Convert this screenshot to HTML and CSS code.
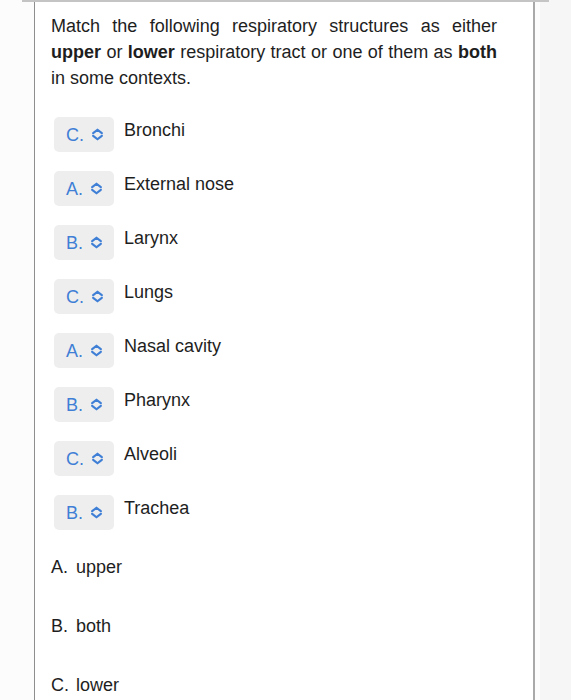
FILE: index.html
```html
<!DOCTYPE html>
<html>
<head>
<meta charset="utf-8">
<link rel="stylesheet" href="styles.css">
</head>
<body>
<div class="page">
  <div class="card">
    <p class="question">Match the following respiratory structures as either <b>upper</b> or <b>lower</b> respiratory tract or one of them as <b>both</b> in some contexts.</p>
    <div class="rows">
      <div class="row"><div class="select"><span class="val">C.</span><svg class="chev" viewBox="0 0 12 12"><path d="M2 4.8L6 1.6L10 4.8M2 7.2L6 10.4L10 7.2"/></svg></div><span class="label">Bronchi</span></div>
      <div class="row"><div class="select"><span class="val">A.</span><svg class="chev" viewBox="0 0 12 12"><path d="M2 4.8L6 1.6L10 4.8M2 7.2L6 10.4L10 7.2"/></svg></div><span class="label">External nose</span></div>
      <div class="row"><div class="select"><span class="val">B.</span><svg class="chev" viewBox="0 0 12 12"><path d="M2 4.8L6 1.6L10 4.8M2 7.2L6 10.4L10 7.2"/></svg></div><span class="label">Larynx</span></div>
      <div class="row"><div class="select"><span class="val">C.</span><svg class="chev" viewBox="0 0 12 12"><path d="M2 4.8L6 1.6L10 4.8M2 7.2L6 10.4L10 7.2"/></svg></div><span class="label">Lungs</span></div>
      <div class="row"><div class="select"><span class="val">A.</span><svg class="chev" viewBox="0 0 12 12"><path d="M2 4.8L6 1.6L10 4.8M2 7.2L6 10.4L10 7.2"/></svg></div><span class="label">Nasal cavity</span></div>
      <div class="row"><div class="select"><span class="val">B.</span><svg class="chev" viewBox="0 0 12 12"><path d="M2 4.8L6 1.6L10 4.8M2 7.2L6 10.4L10 7.2"/></svg></div><span class="label">Pharynx</span></div>
      <div class="row"><div class="select"><span class="val">C.</span><svg class="chev" viewBox="0 0 12 12"><path d="M2 4.8L6 1.6L10 4.8M2 7.2L6 10.4L10 7.2"/></svg></div><span class="label">Alveoli</span></div>
      <div class="row"><div class="select"><span class="val">B.</span><svg class="chev" viewBox="0 0 12 12"><path d="M2 4.8L6 1.6L10 4.8M2 7.2L6 10.4L10 7.2"/></svg></div><span class="label">Trachea</span></div>
    </div>
    <ul class="options">
      <li><span class="letter">A.</span>upper</li>
      <li><span class="letter">B.</span>both</li>
      <li><span class="letter">C.</span>lower</li>
    </ul>
  </div>
</div>
</body>
</html>
```

FILE: styles.css
```css
html, body {
  margin: 0;
  padding: 0;
  height: 700px;
  overflow: hidden;
}
body {
  background: linear-gradient(to right, #fcfcfc 0, #fcfcfc 540px, #f6f6f6 540px);
  font-family: "Liberation Sans", Arial, sans-serif;
  font-size: 18px;
  color: #1e1e1e;
}
.page {
  margin-left: 22px;
  width: 527px;
  border-top: 2px solid #c4c4c4;
  height: 698px;
}
.card {
  margin-left: 12px;
  width: 501px;
  height: 698px;
  background: #fff;
  border-left: 1px solid #8e8e8e;
  border-right: 2px solid #a9a9a9;
  padding: 11px 0 0 16px;
  box-sizing: border-box;
}
.question {
  margin: 0;
  width: 446px;
  line-height: 26px;
  text-align: justify;
}
.question b {
  font-weight: bold;
}
.rows {
  margin-top: 26px;
  display: flex;
  flex-direction: column;
  gap: 19px;
}
.row {
  display: flex;
  align-items: flex-start;
  gap: 10px;
  margin-left: 3px;
}
.select {
  width: 60px;
  height: 35px;
  box-sizing: border-box;
  background: #eeeeee;
  border-radius: 5px;
  display: flex;
  align-items: center;
  padding-left: 12px;
  gap: 7px;
}
.val {
  color: #3f7fd6;
  font-size: 18px;
  line-height: 20px;
  padding-top: 1px;
}
.chev {
  width: 13px;
  height: 13px;
  flex: none;
  fill: none;
  stroke: #3f7fd6;
  stroke-width: 2;
  stroke-linecap: round;
  stroke-linejoin: round;
}
.label {
  line-height: 20px;
  padding-top: 3px;
}
.options {
  list-style: none;
  margin: 27px 0 0 0;
  padding: 0;
}
.options li {
  height: 59px;
  line-height: 20px;
}
.letter {
  display: inline-block;
  width: 25px;
}
```
